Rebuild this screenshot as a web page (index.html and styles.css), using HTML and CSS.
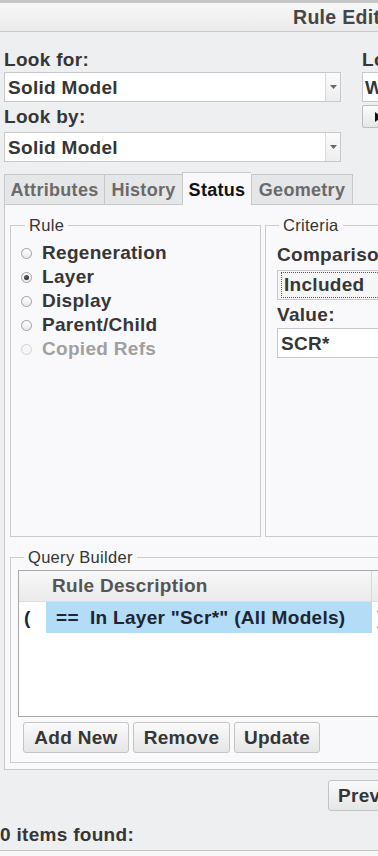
FILE: index.html
```html
<!DOCTYPE html>
<html>
<head>
<meta charset="utf-8">
<link rel="stylesheet" href="styles.css">
</head>
<body>
<div class="window">
  <div class="titlebar">Rule Editor</div>

  <div class="lookrow">
    <div class="lookcol lookcol-left">
      <div class="label">Look for:</div>
      <div class="combo">
        <span class="combo-text">Solid Model</span>
        <span class="combo-arrow"><svg width="7" height="4" viewBox="0 0 7 4"><path d="M0 0H7L3.5 4Z" fill="#6a6a6a"/></svg></span>
      </div>
      <div class="label label-gap">Look by:</div>
      <div class="combo">
        <span class="combo-text">Solid Model</span>
        <span class="combo-arrow"><svg width="7" height="4" viewBox="0 0 7 4"><path d="M0 0H7L3.5 4Z" fill="#6a6a6a"/></svg></span>
      </div>
    </div>
    <div class="lookcol lookcol-right">
      <div class="label">Look in:</div>
      <div class="field">Workspace</div>
      <div class="smallbtn"><span class="tri"></span></div>
    </div>
  </div>

  <div class="tabstrip">
    <div class="tab tab-attr">Attributes</div>
    <div class="tab tab-hist">History</div>
    <div class="tab tab-status active">Status</div>
    <div class="tab tab-geom tab-last">Geometry</div>
  </div>

  <div class="panel">
    <div class="groups">
      <fieldset class="group group-rule">
        <legend>Rule</legend>
        <div class="radio"><span class="radio-circle"></span>Regeneration</div>
        <div class="radio"><span class="radio-circle checked"></span>Layer</div>
        <div class="radio"><span class="radio-circle"></span>Display</div>
        <div class="radio"><span class="radio-circle"></span>Parent/Child</div>
        <div class="radio disabled"><span class="radio-circle"></span>Copied Refs</div>
      </fieldset>
      <fieldset class="group group-criteria">
        <legend>Criteria</legend>
        <div class="label crit-label">Comparison:</div>
        <div class="crit-combo"><span class="focus-box">Included</span></div>
        <div class="label crit-label2">Value:</div>
        <div class="crit-field">SCR*</div>
      </fieldset>
    </div>

    <fieldset class="group group-qb">
      <legend>Query Builder</legend>
      <div class="qb-table">
        <div class="qb-head">
          <div class="qb-cell"></div>
          <div class="qb-cell qb-headcell">Rule Description</div>
          <div class="qb-cell"></div>
        </div>
        <div class="qb-row">
          <div class="qb-cell qb-paren">(</div>
          <div class="qb-cell qb-sel">==  In Layer "Scr*" (All Models)</div>
          <div class="qb-cell qb-paren">)</div>
        </div>
      </div>
      <div class="qb-buttons">
        <button class="btn btn-add">Add New</button>
        <button class="btn btn-remove">Remove</button>
        <button class="btn btn-update">Update</button>
      </div>
    </fieldset>
  </div>

  <div class="preview-row"><button class="btn btn-preview">Preview</button></div>
  <div class="found">0 items found:</div>
  <div class="statusbar"></div>
</div>
</body>
</html>
```

FILE: styles.css
```css
html, body {
  margin: 0;
  padding: 0;
  width: 378px;
  height: 856px;
  overflow: hidden;
}
body {
  background: #eeeff1;
  font-family: "Liberation Sans", Arial, sans-serif;
  color: #333;
  letter-spacing: 0.3px;
}
.window {
  width: 720px;
  height: 856px;
  display: flex;
  flex-direction: column;
}
.titlebar {
  flex: none;
  height: 28px;
  border-top: 3px solid #c5c5c5;
  border-bottom: 1px solid #cacaca;
  background: linear-gradient(#f7f7f7, #ebebeb);
  padding-left: 293px;
  font-weight: bold;
  font-size: 19.5px;
  line-height: 28px;
  color: #454545;
  white-space: nowrap;
}
.lookrow {
  flex: none;
  display: flex;
  gap: 21px;
  padding-left: 4px;
  margin-top: 17px;
}
.lookcol-left { width: 337px; flex: none; }
.lookcol-right { width: 200px; flex: none; }
.label {
  font-weight: bold;
  font-size: 19px;
  line-height: 22px;
  height: 22px;
  margin-bottom: 1px;
  white-space: nowrap;
  color: #363636;
}
.label-gap { margin-top: 4px; margin-bottom: 4px; }
.combo {
  height: 30px;
  box-sizing: border-box;
  border: 1px solid #c8c8c8;
  background: #fff;
  display: flex;
}
.combo-text {
  flex: 1;
  padding: 4px 0 0 3px;
  font-weight: bold;
  font-size: 19px;
  line-height: 22px;
  color: #363636;
}
.combo-arrow {
  width: 14px;
  border-left: 1px solid #dadada;
  background: linear-gradient(#fbfbfb, #ededed);
  display: flex;
  align-items: center;
  justify-content: center;
}
.field {
  height: 30px;
  box-sizing: border-box;
  border: 1px solid #c8c8c8;
  background: #fff;
  padding: 4px 0 0 2px;
  font-weight: bold;
  font-size: 19px;
  line-height: 22px;
  color: #363636;
}
.smallbtn {
  margin-top: 3px;
  width: 60px;
  height: 23px;
  box-sizing: border-box;
  border: 1px solid #bdbdbd;
  border-radius: 2px;
  background: linear-gradient(#fbfbfb, #e7e7e7);
  padding-left: 12px;
  display: flex;
  align-items: center;
}
.tri {
  width: 0;
  height: 0;
  border-left: 7px solid #111;
  border-top: 5px solid transparent;
  border-bottom: 5px solid transparent;
}

/* tabs */
.tabstrip {
  flex: none;
  display: flex;
  align-items: flex-end;
  height: 30px;
  margin: 12px 0 0 4px;
}
.tab {
  flex: none;
  box-sizing: border-box;
  height: 30px;
  border: 1px solid #c8c8c8;
  border-right: none;
  border-bottom: none;
  background: #e5e6e8;
  color: #6a6a6a;
  font-weight: bold;
  font-size: 18px;
  text-align: center;
  padding-top: 2px;
  line-height: 26px;
}
.tab-last { border-right: 1px solid #c8c8c8; }
.tab-attr { width: 100px; }
.tab-hist { width: 78px; }
.tab-status { width: 69px; }
.tab-geom { width: 102px; }
.tab.active {
  height: 33px;
  margin-bottom: -1px;
  padding-top: 4px;
  background: #f9f9fb;
  color: #111;
  position: relative;
  z-index: 1;
}

/* panel */
.panel {
  flex: none;
  margin-left: 4px;
  width: 700px;
  box-sizing: border-box;
  border: 1px solid #c8c8c8;
  background: #f9f9fb;
  padding: 10px 0 6px 5px;
}
.groups {
  display: flex;
  gap: 4px;
  height: 322px;
}
.group {
  margin: 0;
  border: 1px solid #cbcbcb;
  padding: 6px 0 0 10px;
  min-width: 0;
  box-sizing: border-box;
}
.group legend {
  padding: 0 4px;
  margin-left: 4px;
  font-size: 16.5px;
  line-height: 20px;
  color: #333;
}
.group-rule { width: 251px; flex: none; }
.group-criteria { width: 300px; flex: none; padding-left: 11px; padding-top: 9px; }
.group-criteria legend { margin-left: 2px; }
.radio {
  display: flex;
  align-items: center;
  gap: 10px;
  height: 24px;
  font-weight: bold;
  font-size: 19px;
  color: #363636;
  white-space: nowrap;
}
.radio-circle {
  flex: none;
  width: 11px;
  height: 11px;
  box-sizing: border-box;
  border-radius: 50%;
  border: 1px solid #9e9e9e;
  background: linear-gradient(#ffffff, #e9e9e9);
  display: flex;
  align-items: center;
  justify-content: center;
}
.radio-circle.checked::after {
  content: "";
  width: 5px;
  height: 5px;
  border-radius: 50%;
  background: radial-gradient(circle at 40% 35%, #666, #111);
}
.radio.disabled { color: #a0a0a0; }
.radio.disabled .radio-circle { border-color: #d2d2d2; background: #f6f6f6; }

.crit-label { margin-bottom: 4px; }
.crit-combo {
  width: 250px;
  height: 30px;
  box-sizing: border-box;
  border: 1px solid #c8c8c8;
  background: #f6f6f6;
  padding: 1px 0 1px 3px;
  display: flex;
}
.focus-box {
  flex: 1;
  border: 1px dotted #555;
  font-weight: bold;
  font-size: 19px;
  line-height: 24px;
  padding-left: 2px;
  color: #363636;
}
.crit-label2 { margin-top: 4px; margin-bottom: 2px; }
.crit-field {
  width: 250px;
  height: 30px;
  box-sizing: border-box;
  border: 1px solid #c8c8c8;
  background: #fff;
  padding: 4px 0 0 3px;
  font-weight: bold;
  font-size: 19px;
  line-height: 22px;
  color: #363636;
}

/* query builder */
.group-qb {
  margin-top: 10px;
  width: 650px;
  padding: 3px 0 9px 7px;
}
.group-qb legend { margin-left: 6px; }
.qb-table {
  width: 600px;
  height: 147px;
  box-sizing: border-box;
  border: 1px solid #a8a8a8;
  background: #fff;
}
.qb-head, .qb-row {
  display: grid;
  grid-template-columns: 27px 326px 1fr;
}
.qb-head {
  height: 31px;
  box-sizing: border-box;
  border-bottom: 1px solid #dedede;
  background: linear-gradient(#f7f7f7, #ebebeb);
}
.qb-headcell {
  border-right: 1px solid #d8d8d8;
  padding-left: 6px;
  font-weight: bold;
  font-size: 19px;
  line-height: 30px;
  color: #555;
}
.qb-row { height: 31px; }
.qb-cell { white-space: pre; overflow: hidden; }
.qb-paren {
  padding-left: 5px;
  font-weight: bold;
  font-size: 19px;
  line-height: 31px;
  color: #1d2535;
}
.qb-sel {
  background: #b3dcf6;
  padding-left: 10px;
  font-weight: bold;
  font-size: 19px;
  line-height: 31px;
  color: #1d2535;
}
.qb-buttons {
  display: flex;
  gap: 4px;
  margin: 5px 0 0 5px;
}
.btn {
  height: 31px;
  box-sizing: border-box;
  border: 1px solid #c3c3c3;
  border-radius: 3px;
  background: linear-gradient(#fafafa, #e6e6e6);
  font-family: "Liberation Sans", Arial, sans-serif;
  font-weight: bold;
  font-size: 19px;
  letter-spacing: inherit;
  color: #363636;
  padding: 0;
  text-align: center;
}
.btn-add { width: 106px; }
.btn-remove { width: 97px; }
.btn-update { width: 86px; }

.preview-row {
  flex: none;
  margin-top: 10px;
  padding-left: 328px;
}
.btn-preview {
  width: 100px;
  text-align: left;
  padding-left: 9px;
}
.found {
  flex: none;
  margin-top: 13px;
  font-weight: bold;
  font-size: 19px;
  line-height: 22px;
  padding-bottom: 4px;
  border-bottom: 1px solid #c2c2c2;
  color: #363636;
  white-space: nowrap;
}
.statusbar {
  flex: 1;
  background: #f7f7f7;
}
```
